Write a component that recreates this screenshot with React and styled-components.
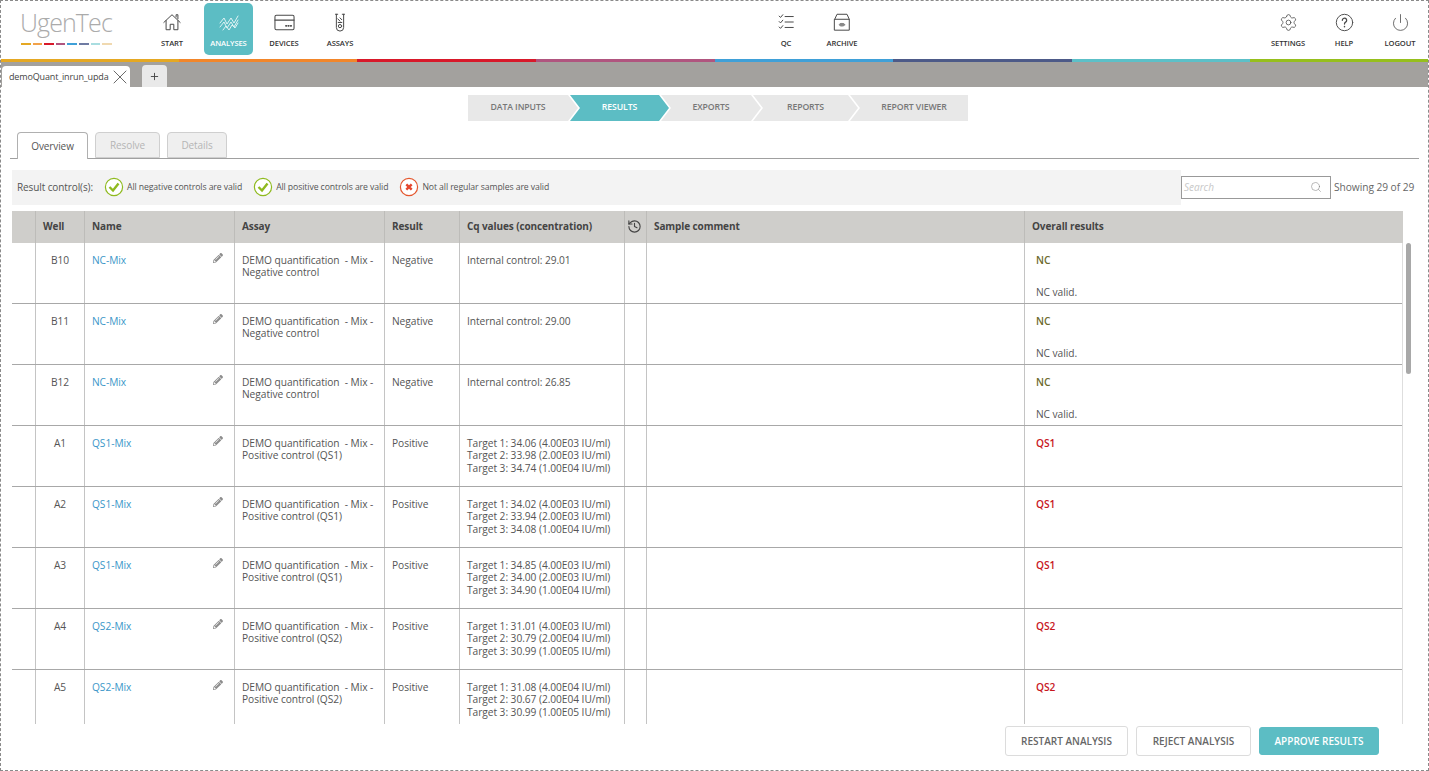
import styled, { createGlobalStyle } from "styled-components";
import { Settings, Power, Search, X, Plus, History } from "lucide-react";
import { FaPencilAlt } from "react-icons/fa";

const GlobalStyle = createGlobalStyle`
  html, body {
    margin: 0;
    padding: 0;
    background: #fff;
  }
  body {
    font-family: "Open Sans", "Noto Sans", sans-serif;
    color: #555;
  }
`;

const Frame = styled.div`
  box-sizing: border-box;
  width: 1429px;
  height: 771px;
  border: 1px dashed #8a8a8a;
  display: flex;
  flex-direction: column;
  overflow: hidden;
`;

const Nav = styled.nav`
  display: flex;
  height: 58px;
  flex: none;
`;

const NavLeft = styled.div`
  display: flex;
  width: 757px;
`;

const NavGroup = styled.div`
  display: flex;
`;

const NavRight = styled(NavGroup)`
  margin-left: auto;
`;

const Logo = styled.div`
  width: 143px;
  padding: 5px 0 0 19px;
  box-sizing: border-box;
`;

const LogoName = styled.div`
  font-size: 25px;
  line-height: 32px;
  font-weight: 300;
  letter-spacing: -0.9px;
  color: #ababab;
`;

const LogoBars = styled.div`
  display: flex;
  gap: 2px;
  margin: 5px 0 0 1px;
`;

const LogoBar = styled.span`
  width: 9.6px;
  height: 2px;
  background: ${(p) => p.$color};
`;

const NavItem = styled.div`
  box-sizing: border-box;
  width: ${(p) => (p.$active ? "49px" : "56px")};
  margin: ${(p) => (p.$active ? "2px 3px 0 4px" : "2px 0 0")};
  height: 52px;
  border-radius: 5px;
  background: ${(p) => (p.$active ? "#5cbdc4" : "transparent")};
  color: ${(p) => (p.$active ? "#fff" : "#333")};
  display: flex;
  flex-direction: column;
  align-items: center;
  padding-top: 8px;
  svg {
    display: block;
  }
`;

const NavIcon = styled.div`
  height: 22px;
  display: flex;
  align-items: center;
  justify-content: center;
  color: ${(p) => (p.$active ? "#dff3f4" : "#4a4a4a")};
`;

const NavLabel = styled.div`
  margin-top: 5px;
  font-size: 7.6px;
  line-height: 10px;
  font-weight: 600;
  letter-spacing: -0.1px;
  white-space: nowrap;
`;

const Strip = styled.div`
  display: flex;
  flex: none;
  height: 3px;
  margin: 0 -1px;
`;

const StripPart = styled.div`
  flex: 1;
  background: ${(p) => p.$color};
`;

const TabBar = styled.div`
  display: flex;
  flex: none;
  align-items: flex-end;
  height: 25px;
  background: #a3a19e;
  padding-left: 1px;
`;

const FileTab = styled.div`
  display: flex;
  align-items: center;
  box-sizing: border-box;
  width: 128px;
  height: 21px;
  padding-left: 7px;
  background: #fff;
  border-radius: 4px 4px 0 0;
  font-size: 9px;
  letter-spacing: -0.15px;
  color: #444;
  svg {
    flex: none;
  }
`;

const FileName = styled.span`
  flex: 1;
  white-space: nowrap;
`;

const AddTab = styled.div`
  display: flex;
  align-items: center;
  justify-content: center;
  width: 25px;
  height: 22px;
  margin-left: 12px;
  background: #e9e9e9;
  border-radius: 4px 4px 0 0;
  color: #444;
`;

const Wizard = styled.div`
  display: flex;
  flex: none;
  margin: 8px 0 0 467px;
  height: 26px;
`;

const Step = styled.div`
  display: flex;
  align-items: center;
  justify-content: center;
  box-sizing: border-box;
  width: ${(p) => p.$width}px;
  margin-left: ${(p) => (p.$first ? 0 : -8)}px;
  padding: 0 ${(p) => (p.$last ? 0 : 10)}px 2px ${(p) => (p.$first ? 0 : 10)}px;
  font-size: 8.7px;
  font-weight: 600;
  white-space: nowrap;
  letter-spacing: -0.1px;
  background: ${(p) => (p.$active ? "#5cbdc4" : "#e8e8e8")};
  color: ${(p) => (p.$active ? "#fff" : "#777")};
  clip-path: polygon(
    0 0,
    ${(p) => (p.$last ? "100% 0, 100% 100%" : "calc(100% - 10px) 0, 100% 50%, calc(100% - 10px) 100%")},
    0 100%
    ${(p) => (p.$first ? "" : ", 10px 50%")}
  );
`;

const SubTabs = styled.div`
  display: flex;
  flex: none;
  gap: 7px;
  height: 26px;
  margin: 11px 9px 0 9px;
  padding-left: 7px;
  border-bottom: 1px solid #a0a0a0;
`;

const SubTab = styled.div`
  box-sizing: border-box;
  width: ${(p) => p.$width}px;
  height: ${(p) => (p.$active ? "27px" : "26px")};
  border: 1px solid ${(p) => (p.$active ? "#b0b0b0" : "#cfcfcf")};
  border-bottom: ${(p) => (p.$active ? "none" : "1px solid #cfcfcf")};
  border-radius: 4px 4px 0 0;
  background: ${(p) => (p.$active ? "#fff" : "#efefef")};
  color: ${(p) => (p.$active ? "#555" : "#b5b5b5")};
  font-size: 10px;
  letter-spacing: -0.1px;
  display: flex;
  align-items: center;
  justify-content: center;
`;

const ControlRow = styled.div`
  display: flex;
  flex: none;
  align-items: center;
  height: 35px;
  margin: 11px 0 0 11px;
`;

const ControlBar = styled.div`
  display: flex;
  align-items: center;
  width: 1169px;
  height: 35px;
  box-sizing: border-box;
  padding: 0 0 2px 5px;
  background: #f3f3f3;
  font-size: 8.7px;
  letter-spacing: -0.1px;
  color: #555;
`;

const ControlLabel = styled.span`
  font-size: 10px;
  width: 87px;
`;

const Check = styled.div`
  display: flex;
  align-items: center;
  gap: 3px;
  margin-right: 11px;
  white-space: nowrap;
`;

const SearchBox = styled.div`
  display: flex;
  align-items: center;
  justify-content: space-between;
  box-sizing: border-box;
  width: 150px;
  height: 23px;
  padding: 0 8px 2px 2px;
  border: 1px solid #999;
  font-size: 10px;
  font-style: italic;
  color: #c8c8c8;
  background: #fff;
`;

const Showing = styled.span`
  margin: 0 0 2px 3px;
  font-size: 10.2px;
  letter-spacing: -0.05px;
  white-space: nowrap;
  color: #666;
`;

const TableArea = styled.div`
  display: flex;
  flex: 1;
  min-height: 0;
  margin: 6px 0 0 11px;
`;

const Table = styled.div`
  display: flex;
  flex-direction: column;
  width: 1391px;
  min-height: 0;
`;

const columns = "24px 49px 150px 150px 75px 165px 22px 378px 378px";

const HeadRow = styled.div`
  display: grid;
  grid-template-columns: ${columns};
  flex: none;
  box-sizing: border-box;
  height: 32px;
  background: #cfcecb;
`;

const HeadCell = styled.div`
  display: flex;
  align-items: center;
  padding: 0 0 2px 7px;
  font-size: 10px;
  font-weight: 700;
  letter-spacing: -0.1px;
  color: #444;
  border-right: 1px solid #bdbcb9;
  &:last-child {
    border-right: none;
  }
`;

const HistoryCell = styled(HeadCell)`
  padding-left: 2px;
`;

const Body = styled.div`
  flex: 1;
  min-height: 0;
  overflow: hidden;
  border-right: 1px solid #dedede;
`;

const Row = styled.div`
  display: grid;
  grid-template-columns: ${columns};
  box-sizing: border-box;
  height: 61px;
  border-bottom: 1px solid #a8a8a8;
`;

const Cell = styled.div`
  box-sizing: border-box;
  padding: 11px 7px 0;
  font-size: 10.2px;
  line-height: 12.4px;
  letter-spacing: -0.05px;
  white-space: pre-wrap;
  color: #555;
  border-right: 1px solid #c4c4c4;
  &:last-child {
    border-right: none;
    padding-left: 11px;
  }
`;

const WellCell = styled(Cell)`
  padding-left: 0;
  padding-right: 0;
  text-align: center;
`;

const NameCell = styled(Cell)`
  display: flex;
  justify-content: space-between;
  padding-right: 11px;
  color: #3a96c8;
`;

const Pen = styled.span`
  margin-top: -1px;
  color: #8c8c8c;
`;

const Outcome = styled.div`
  font-weight: 600;
  color: ${(p) => p.$color};
`;

const Note = styled.div`
  margin-top: 20px;
`;

const ScrollTrack = styled.div`
  margin: 32px 0 0 3px;
`;

const ScrollThumb = styled.div`
  width: 5px;
  height: 131px;
  border-radius: 3px;
  background: #a8a8a8;
`;

const Footer = styled.div`
  display: flex;
  flex: none;
  justify-content: flex-end;
  align-items: center;
  gap: 8px;
  height: 46px;
  padding: 0 49px 13px 0;
  box-sizing: border-box;
`;

const Button = styled.div`
  display: flex;
  align-items: center;
  justify-content: center;
  box-sizing: border-box;
  width: ${(p) => p.$width}px;
  height: ${(p) => (p.$primary ? "28px" : "30px")};
  border: 1px solid ${(p) => (p.$primary ? "#5cbdc4" : "#dcdcdc")};
  border-radius: 3px;
  background: ${(p) => (p.$primary ? "#5cbdc4" : "#fff")};
  color: ${(p) => (p.$primary ? "#fff" : "#666")};
  font-size: 10px;
  font-weight: 600;
  white-space: nowrap;
`;

const Line = ({ children, size = 20, box = 22, width = 1.1 }) => (
  <svg
    width={size}
    height={size}
    viewBox={`0 0 ${box} ${box}`}
    fill="none"
    stroke="currentColor"
    strokeWidth={width}
    strokeLinecap="round"
    strokeLinejoin="round"
  >
    {children}
  </svg>
);

const HomeIcon = () => (
  <Line>
    <path d="M2 11.5 11 3l9 8.5" />
    <path d="M4.5 9.5V19.5H9V13.5H13V19.5H17.5V9.5" />
    <path d="M15.5 5.5V3H17.5V7.5" />
  </Line>
);

const AnalysesIcon = () => (
  <Line size={22} width={1}>
    <path d="M2 12 6 7l3 6 4-6 3 5 4-7" />
    <path d="M2 16l4-5 3 6 4-6 3 5 4-7" />
    <path d="M5 19l3-4 3 4 3-5 3 3 3-5" />
  </Line>
);

const DevicesIcon = () => (
  <Line size={21}>
    <rect x="1" y="3.5" width="20" height="15" rx="1.5" />
    <path d="M1 8.5H21" />
    <path d="M12.5 14.5H13M15 14.5H15.5M17.5 14.5H18" strokeWidth="1.8" />
  </Line>
);

const AssaysIcon = () => (
  <Line>
    <path d="M7 2.5V17a4 4 0 0 0 8 0V2.5" />
    <path d="M6 2.5H8.5M13.5 2.5H16" />
    <circle cx="11" cy="15.5" r="1.8" />
    <path d="M8.5 7.5 11 10M11 6.5l2 2M9 11.5H13" />
  </Line>
);

const QcIcon = () => (
  <Line>
    <path d="M3.5 4.5 5 6l2.5-3M3.5 10.5 5 12l2.5-3M3.5 16.5 5 18l2.5-3" />
    <path d="M10 5H19M10 11H19M10 17H19" />
  </Line>
);

const ArchiveIcon = () => (
  <Line>
    <path d="M3 8 5.5 2.5H16.5L19 8" />
    <rect x="3" y="8" width="16" height="12" />
    <ellipse cx="11" cy="14" rx="3" ry="1.5" fill="#888" stroke="#888" />
  </Line>
);

const HelpIcon = () => (
  <Line size={19}>
    <circle cx="11" cy="11" r="9.5" />
    <path d="M8.5 8.5a2.5 2.5 0 1 1 3.8 2.1c-.9.6-1.3 1-1.3 2.2" strokeWidth="1.5" />
    <path d="M11 15.8V16" strokeWidth="1.8" />
  </Line>
);

const StatusIcon = ({ ok }) => (
  <svg width="20" height="20" viewBox="0 0 20 20">
    <circle cx="10" cy="10" r="8.6" fill="#fff" stroke={ok ? "#8fba1f" : "#e4572e"} strokeWidth="1.2" />
    {ok ? (
      <path d="M5.5 10 9 13.5 14.5 6.5" fill="none" stroke="#8fba1f" strokeWidth="2.4" />
    ) : (
      <path d="M7.3 7.3 12.7 12.7M12.7 7.3 7.3 12.7" fill="none" stroke="#e4472e" strokeWidth="2.4" />
    )}
  </svg>
);

const stripColors = ["#e5a823", "#f2862a", "#d8192a", "#b0557f", "#3fa0d8", "#4d5a88", "#5cc0c8", "#96bf1d"];
const logoColors = ["#e5a823", "#f2a24a", "#d8192a", "#b0557f", "#3fa0d8", "#6f7ba3", "#a9dde0", "#f0d9b0"];

const steps = [
  { label: "DATA INPUTS", width: 110, first: true },
  { label: "RESULTS", width: 99, active: true },
  { label: "EXPORTS", width: 100 },
  { label: "REPORTS", width: 105 },
  { label: "REPORT VIEWER", width: 118, last: true },
];

const ncNote = "NC valid.";
const negAssay = "DEMO quantification  - Mix -\nNegative control";

const rows = [
  { well: "B10", name: "NC-Mix", assay: negAssay, result: "Negative", cq: "Internal control: 29.01", out: "NC", note: ncNote },
  { well: "B11", name: "NC-Mix", assay: negAssay, result: "Negative", cq: "Internal control: 29.00", out: "NC", note: ncNote },
  { well: "B12", name: "NC-Mix", assay: negAssay, result: "Negative", cq: "Internal control: 26.85", out: "NC", note: ncNote },
  {
    well: "A1",
    name: "QS1-Mix",
    assay: "DEMO quantification  - Mix -\nPositive control (QS1)",
    result: "Positive",
    cq: "Target 1: 34.06 (4.00E03 IU/ml)\nTarget 2: 33.98 (2.00E03 IU/ml)\nTarget 3: 34.74 (1.00E04 IU/ml)",
    out: "QS1",
  },
  {
    well: "A2",
    name: "QS1-Mix",
    assay: "DEMO quantification  - Mix -\nPositive control (QS1)",
    result: "Positive",
    cq: "Target 1: 34.02 (4.00E03 IU/ml)\nTarget 2: 33.94 (2.00E03 IU/ml)\nTarget 3: 34.08 (1.00E04 IU/ml)",
    out: "QS1",
  },
  {
    well: "A3",
    name: "QS1-Mix",
    assay: "DEMO quantification  - Mix -\nPositive control (QS1)",
    result: "Positive",
    cq: "Target 1: 34.85 (4.00E03 IU/ml)\nTarget 2: 34.00 (2.00E03 IU/ml)\nTarget 3: 34.90 (1.00E04 IU/ml)",
    out: "QS1",
  },
  {
    well: "A4",
    name: "QS2-Mix",
    assay: "DEMO quantification  - Mix -\nPositive control (QS2)",
    result: "Positive",
    cq: "Target 1: 31.01 (4.00E03 IU/ml)\nTarget 2: 30.79 (2.00E04 IU/ml)\nTarget 3: 30.99 (1.00E05 IU/ml)",
    out: "QS2",
  },
  {
    well: "A5",
    name: "QS2-Mix",
    assay: "DEMO quantification  - Mix -\nPositive control (QS2)",
    result: "Positive",
    cq: "Target 1: 31.08 (4.00E04 IU/ml)\nTarget 2: 30.67 (2.00E04 IU/ml)\nTarget 3: 30.99 (1.00E05 IU/ml)",
    out: "QS2",
  },
];

export default function App() {
  return (
    <>
      <GlobalStyle />
      <Frame>
        <Nav>
          <NavLeft>
            <Logo>
              <LogoName>UgenTec</LogoName>
              <LogoBars>
                {logoColors.map((color) => (
                  <LogoBar key={color} $color={color} />
                ))}
              </LogoBars>
            </Logo>
            <NavItem>
              <NavIcon><HomeIcon /></NavIcon>
              <NavLabel>START</NavLabel>
            </NavItem>
            <NavItem $active>
              <NavIcon $active><AnalysesIcon /></NavIcon>
              <NavLabel>ANALYSES</NavLabel>
            </NavItem>
            <NavItem>
              <NavIcon><DevicesIcon /></NavIcon>
              <NavLabel>DEVICES</NavLabel>
            </NavItem>
            <NavItem>
              <NavIcon><AssaysIcon /></NavIcon>
              <NavLabel>ASSAYS</NavLabel>
            </NavItem>
          </NavLeft>
          <NavGroup>
            <NavItem>
              <NavIcon><QcIcon /></NavIcon>
              <NavLabel>QC</NavLabel>
            </NavItem>
            <NavItem>
              <NavIcon><ArchiveIcon /></NavIcon>
              <NavLabel>ARCHIVE</NavLabel>
            </NavItem>
          </NavGroup>
          <NavRight>
            <NavItem>
              <NavIcon><Settings size={19} strokeWidth={1} /></NavIcon>
              <NavLabel>SETTINGS</NavLabel>
            </NavItem>
            <NavItem>
              <NavIcon><HelpIcon /></NavIcon>
              <NavLabel>HELP</NavLabel>
            </NavItem>
            <NavItem>
              <NavIcon><Power size={19} strokeWidth={1} /></NavIcon>
              <NavLabel>LOGOUT</NavLabel>
            </NavItem>
          </NavRight>
        </Nav>
        <Strip>
          {stripColors.map((color) => (
            <StripPart key={color} $color={color} />
          ))}
        </Strip>
        <TabBar>
          <FileTab>
            <FileName>demoQuant_inrun_upda</FileName>
            <X size={24} strokeWidth={0.8} />
          </FileTab>
          <AddTab>
            <Plus size={11} strokeWidth={2} />
          </AddTab>
        </TabBar>
        <Wizard>
          {steps.map((step) => (
            <Step
              key={step.label}
              $width={step.width}
              $first={step.first}
              $last={step.last}
              $active={step.active}
            >
              {step.label}
            </Step>
          ))}
        </Wizard>
        <SubTabs>
          <SubTab $active $width={71}>Overview</SubTab>
          <SubTab $width={65}>Resolve</SubTab>
          <SubTab $width={60}>Details</SubTab>
        </SubTabs>
        <ControlRow>
          <ControlBar>
            <ControlLabel>Result control(s):</ControlLabel>
            <Check><StatusIcon ok />All negative controls are valid</Check>
            <Check><StatusIcon ok />All positive controls are valid</Check>
            <Check><StatusIcon />Not all regular samples are valid</Check>
          </ControlBar>
          <SearchBox>
            Search
            <Search size={12} strokeWidth={1} color="#777" />
          </SearchBox>
          <Showing>Showing 29 of 29</Showing>
        </ControlRow>
        <TableArea>
          <Table>
            <HeadRow>
              <HeadCell />
              <HeadCell>Well</HeadCell>
              <HeadCell>Name</HeadCell>
              <HeadCell>Assay</HeadCell>
              <HeadCell>Result</HeadCell>
              <HeadCell>Cq values (concentration)</HeadCell>
              <HistoryCell><History size={15} strokeWidth={1.8} /></HistoryCell>
              <HeadCell>Sample comment</HeadCell>
              <HeadCell>Overall results</HeadCell>
            </HeadRow>
            <Body>
              {rows.map((row) => (
                <Row key={row.well}>
                  <Cell />
                  <WellCell>{row.well}</WellCell>
                  <NameCell>
                    {row.name}
                    <Pen><FaPencilAlt size={10} /></Pen>
                  </NameCell>
                  <Cell>{row.assay}</Cell>
                  <Cell>{row.result}</Cell>
                  <Cell>{row.cq}</Cell>
                  <Cell />
                  <Cell />
                  <Cell>
                    <Outcome $color={row.out === "NC" ? "#6d6a2c" : "#c8161d"}>{row.out}</Outcome>
                    {row.note && <Note>{row.note}</Note>}
                  </Cell>
                </Row>
              ))}
            </Body>
          </Table>
          <ScrollTrack>
            <ScrollThumb />
          </ScrollTrack>
        </TableArea>
        <Footer>
          <Button $width={123}>RESTART ANALYSIS</Button>
          <Button $width={115}>REJECT ANALYSIS</Button>
          <Button $primary $width={120}>APPROVE RESULTS</Button>
        </Footer>
      </Frame>
    </>
  );
}
